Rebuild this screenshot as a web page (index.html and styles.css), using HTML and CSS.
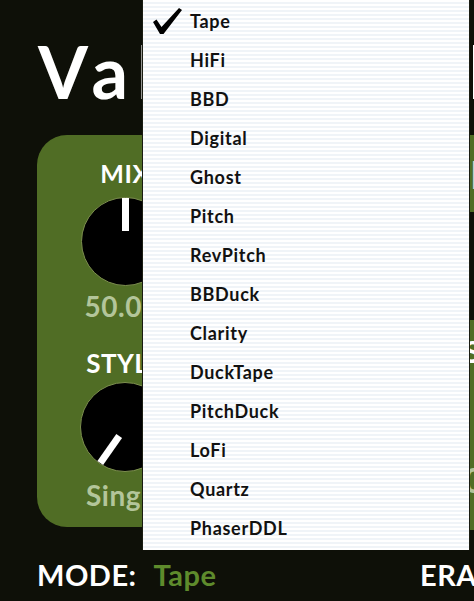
FILE: index.html
```html
<!DOCTYPE html>
<html lang="en">
<head>
<meta charset="utf-8">
<title>ValhallaDelay</title>
<link rel="stylesheet" href="styles.css">
</head>
<body>
<div class="app">
  <h1 class="title">ValhallaDelay</h1>
  <div class="main">
    <section class="panel panel-left">
      <div class="control">
        <div class="label">MIX</div>
        <div class="knob"><span class="pointer"></span></div>
        <div class="value">50.0%</div>
      </div>
      <div class="control control-style">
        <div class="label">STYLE</div>
        <div class="knob knob-style"><span class="pointer"></span></div>
        <div class="value">Single</div>
      </div>
    </section>
    <div class="side">
      <section class="panel panel-top">
        <div class="label side-label">FEEDBACK</div>
      </section>
      <section class="panel panel-bottom">
        <div class="label side-label2">SPREAD</div>
        <div class="value side-value">0.00</div>
      </section>
    </div>
  </div>
  <footer class="footer">
    <div class="mode"><span class="mode-key">MODE:</span><span class="mode-val">Tape</span></div>
    <div class="mode"><span class="mode-key">ERA:</span><span class="mode-val">Present</span></div>
  </footer>

  <ul class="menu">
    <li class="item checked"><span class="check"><svg viewBox="0 0 30 28" width="30" height="28"><path d="M1 15 L4.5 12.5 L9.5 20 L27 1 L30 3 L11.5 27 L8 27 Z" fill="#000"/></svg></span><span class="text">Tape</span></li>
    <li class="item"><span class="check"></span><span class="text">HiFi</span></li>
    <li class="item"><span class="check"></span><span class="text">BBD</span></li>
    <li class="item"><span class="check"></span><span class="text">Digital</span></li>
    <li class="item"><span class="check"></span><span class="text">Ghost</span></li>
    <li class="item"><span class="check"></span><span class="text">Pitch</span></li>
    <li class="item"><span class="check"></span><span class="text">RevPitch</span></li>
    <li class="item"><span class="check"></span><span class="text">BBDuck</span></li>
    <li class="item"><span class="check"></span><span class="text">Clarity</span></li>
    <li class="item"><span class="check"></span><span class="text">DuckTape</span></li>
    <li class="item"><span class="check"></span><span class="text">PitchDuck</span></li>
    <li class="item"><span class="check"></span><span class="text">LoFi</span></li>
    <li class="item"><span class="check"></span><span class="text">Quartz</span></li>
    <li class="item"><span class="check"></span><span class="text">PhaserDDL</span></li>
  </ul>
</div>
</body>
</html>
```

FILE: styles.css
```css
* { box-sizing: border-box; }
html, body {
  margin: 0;
  padding: 0;
  background: #0e1008;
}
body {
  width: 474px;
  height: 601px;
  overflow: hidden;
  font-family: "Lato", "Noto Sans", sans-serif;
  font-weight: 700;
}
.app {
  position: relative;
  width: 474px;
  height: 601px;
  overflow: hidden;
}
.title {
  margin: 36px 0 0 38px;
  font-size: 72px;
  line-height: 70px;
  font-weight: 700;
  color: #ffffff;
  white-space: nowrap;
  letter-spacing: 9px;
}
.main {
  display: flex;
  margin-top: 29px;
  padding-left: 37px;
  gap: 103px;
  width: 900px;
}
.panel {
  background: #506d25;
  border-radius: 30px;
}
.panel-left {
  width: 300px;
  height: 392px;
  padding: 23px 0 0 0;
}
.control {
  width: 176px;
  display: flex;
  flex-direction: column;
  align-items: center;
}
.label {
  color: #ffffff;
  font-size: 25px;
  line-height: 30px;
  white-space: nowrap;
  letter-spacing: 0.5px;
}
.knob {
  position: relative;
  margin-top: 9px;
  width: 89px;
  height: 89px;
  border-radius: 50%;
  background: #000;
  border: 1px solid #7d8f4f;
}
.pointer {
  position: absolute;
  left: 50%;
  top: 0;
  width: 7px;
  height: 33px;
  margin-left: -3.5px;
  background: #ffffff;
  transform-origin: 50% 44px;
}
.knob-style .pointer {
  transform: rotate(215deg);
}
.value {
  margin-top: 4px;
  color: #b3c59a;
  font-size: 28px;
  line-height: 32px;
  white-space: nowrap;
  letter-spacing: 0.5px;
}
.control-style {
  margin-top: 26px;
}
.control-style .label {
  font-size: 26px;
  line-height: 30px;
}
.control-style .knob {
  margin-top: 4px;
  width: 90px;
  height: 90px;
}
.control-style .value {
  margin-top: 7px;
}
.side {
  display: flex;
  flex-direction: column;
  gap: 108px;
}
.panel-top {
  width: 220px;
  height: 77px;
  padding: 18px 0 0 30px;
}
.side-label {
  font-size: 38px;
  line-height: 42px;
  color: #d7dccb;
}
.panel-bottom {
  width: 220px;
  height: 210px;
  padding: 14px 0 0 24px;
}
.side-label2 {
  font-size: 30px;
  line-height: 34px;
}
.side-value {
  margin-top: 94px;
  font-size: 34px;
  line-height: 36px;
}
.footer {
  display: grid;
  grid-template-columns: 383px 300px;
  margin-top: 28px;
  padding-left: 37px;
  width: 800px;
}
.mode {
  font-size: 29px;
  line-height: 34px;
  white-space: nowrap;
  letter-spacing: 0.5px;
}
.mode-key {
  color: #ffffff;
  margin-right: 17px;
}
.mode-val {
  color: #5e8b2c;
}
.menu {
  position: absolute;
  left: 143px;
  top: 0;
  width: 327px;
  height: 550px;
  margin: 0;
  padding: 1.5px 0 0 0;
  list-style: none;
  background: repeating-linear-gradient(to bottom, #ffffff 0, #ffffff 2px, #f0f4f8 2px, #f0f4f8 4px);
  border-right: 1px solid #1a1c12;
  box-shadow: -1px 0 0 #1a1c12;
}
.item {
  display: flex;
  align-items: center;
  height: 39px;
  font-size: 18px;
  line-height: 39px;
  color: #111;
  letter-spacing: 0.7px;
}
.check {
  position: relative;
  width: 47px;
  height: 39px;
  flex: none;
}
.check svg {
  position: absolute;
  left: 9px;
  top: 5.5px;
}
.text {
  white-space: nowrap;
}
```
